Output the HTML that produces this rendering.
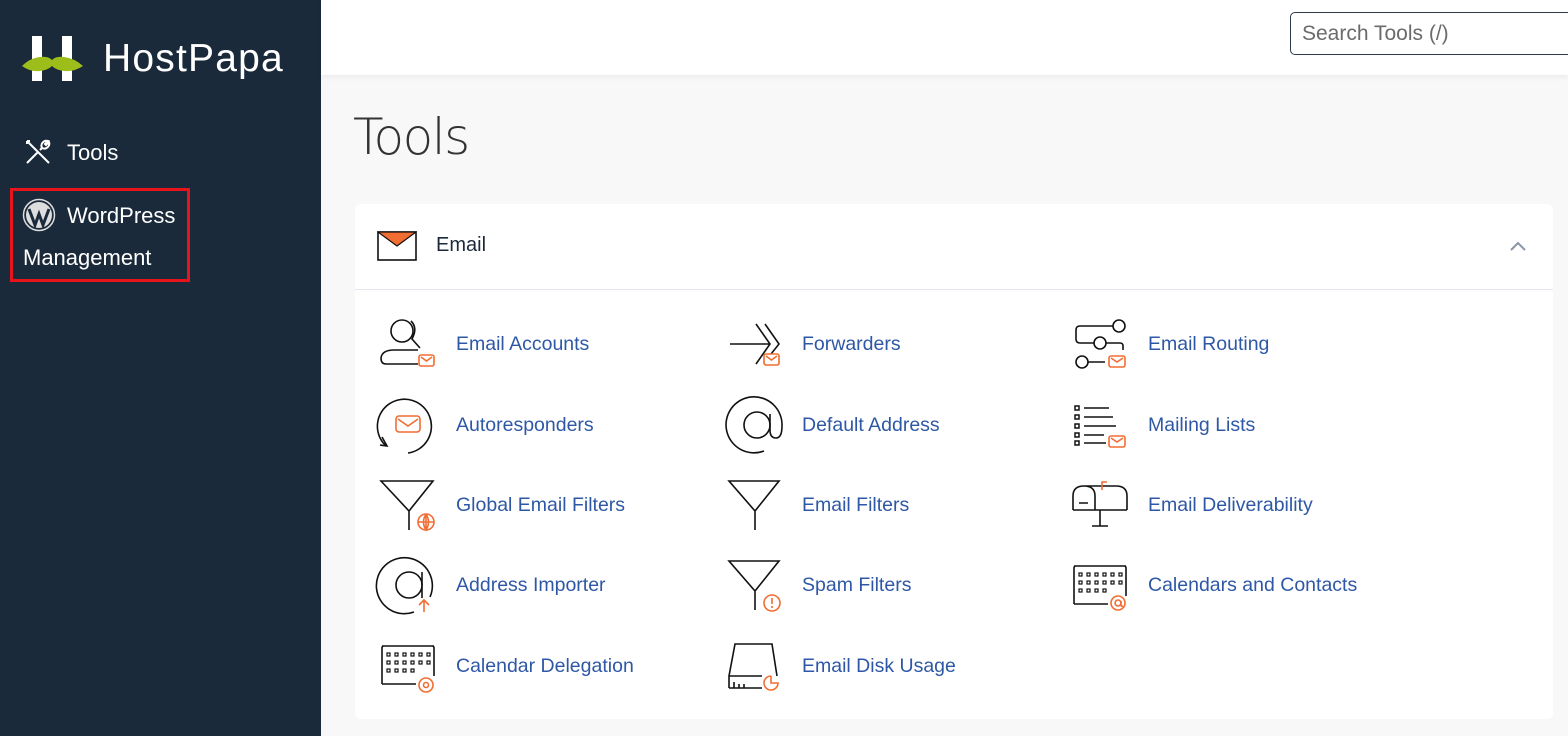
<!DOCTYPE html>
<html><head><meta charset="utf-8"><style>
*{margin:0;padding:0;box-sizing:border-box}
body{width:1568px;height:736px;overflow:hidden;background:#f8f8f8;font-family:"Liberation Sans",sans-serif;position:relative}
.side{position:absolute;left:0;top:0;width:321px;height:736px;background:#1b2a3b}
.hdr{position:absolute;left:321px;top:0;right:0;height:75px;background:#fff;box-shadow:0 2px 6px rgba(0,0,0,.06)}
.search{position:absolute;left:1290px;top:12px;width:300px;height:43px;border:1.5px solid #2d3b4a;border-radius:5px;background:#fff;color:#6b6b6b;font-size:21px;padding:9px 0 0 11px}
h1{position:absolute;left:353px;top:108px;font-size:50px;color:#333;letter-spacing:-1.5px;font-family:"DejaVu Sans","Liberation Sans",sans-serif;font-weight:200}
.card{position:absolute;left:355px;top:204px;width:1198px;height:515px;background:#fff;border-radius:6px}
.ch{height:86px;border-bottom:1px solid #e4e8ee;position:relative}
.ch span{position:absolute;left:81px;top:30px;font-size:20px;color:#1b2a3b}
.it{position:absolute;font-size:19.5px;color:#2e58a6}
.ic{position:absolute;width:60px;height:60px;overflow:visible}
svg .k{fill:none;stroke:#111;stroke-width:1.6}
svg .o{fill:none;stroke:#f26d32;stroke-width:1.6}
.nav{position:absolute;color:#fff;font-size:22px}
</style></head><body>
<div class="side">
<svg style="position:absolute;left:22px;top:36px" width="62" height="46" viewBox="0 0 62 46">
<rect x="10" y="0" width="10" height="45" fill="#fff"/><rect x="40" y="0" width="10" height="45" fill="#fff"/>
<path d="M0 30 Q8 22 18 21 Q26 20 30 24 Q34 20 42 21 Q52 22 61 30 Q52 36 42 35 Q34 34 30 30 Q26 34 18 35 Q8 36 0 30Z" fill="#9cbd1a"/>
</svg>
<div class="nav" style="left:103px;top:37px;font-size:39px;letter-spacing:1.2px">HostPapa</div>
<svg style="position:absolute;left:25px;top:139px" width="26" height="26" viewBox="0 0 26 26"><path d="M2 24 L13 13 M2 2 L24 24 M2 2 L5 2 M2 2 L2 5 M15 11 L17 9 M17 9a5 5 0 0 1 6-7 L20 5 L21 6 L24 3 a5 5 0 0 1 -7 6" stroke="#fff" stroke-width="2" fill="none"/></svg>
<div class="nav" style="left:67px;top:140px">Tools</div>
<div style="position:absolute;left:10px;top:188px;width:180px;height:94px;border:3px solid #e8141b"></div>
<svg style="position:absolute;left:22px;top:198px" width="34" height="34" viewBox="0 0 34 34"><circle cx="17" cy="17" r="15.5" fill="none" stroke="#ddd" stroke-width="1.5"/><circle cx="17" cy="17" r="13" fill="#ddd"/><path d="M7 11 L13 27 L17 16 L21 27 L27 11" stroke="#1b2a3b" stroke-width="3" fill="none"/></svg>
<div class="nav" style="left:67px;top:203px">WordPress</div>
<div class="nav" style="left:23px;top:245px">Management</div>
</div>
<div class="hdr"></div>
<div class="search">Search Tools (/)</div>
<h1>Tools</h1>
<div class="card">
<div class="ch">
<svg style="position:absolute;left:22px;top:27px" width="40" height="30" viewBox="0 0 40 30"><rect x="1" y="1" width="38" height="28" fill="#fff" stroke="#111" stroke-width="1.6"/><path d="M1 1 H39 L20 15Z" fill="#f26d32" stroke="#111" stroke-width="1.2"/></svg>
<span>Email</span>
<svg style="position:absolute;left:1154px;top:36px" width="18" height="12" viewBox="0 0 18 12"><path d="M2 10 L9 3 L16 10" stroke="#8a95a5" stroke-width="2" fill="none"/></svg>
</div>
</div>

<!-- col1 -->
<svg class="ic" style="left:378px;top:316px" viewBox="0 0 60 60"><circle class="k" cx="24" cy="15" r="11"/><path class="k" d="M33 5 Q40 12 34 23 L42 32"/><path class="k" d="M40 34 H16 Q4 34 3 42 Q3 48 8 48 H40"/><rect class="o" x="41" y="39" width="15" height="11" rx="2"/><path class="o" d="M43 41 L48.5 45 L54 41"/></svg>
<div class="it" style="left:456px;top:333px">Email Accounts</div>

<svg class="ic" style="left:378px;top:396px" viewBox="0 0 60 60"><path class="k" d="M8 50 A27 27 0 1 1 30 57"/><path class="k" d="M4 41 L9 50 L2 49"/><rect class="o" x="18" y="20" width="24" height="16" rx="3"/><path class="o" d="M20 23 L30 30 L40 23"/></svg>
<div class="it" style="left:456px;top:414px">Autoresponders</div>

<svg class="ic" style="left:378px;top:476px" viewBox="0 0 60 60"><path class="k" d="M3 5 H55 L31 35Z M31 35 V54"/><circle class="o" cx="48" cy="46" r="8"/><path class="o" d="M40 46 H56 M48 38 Q43 46 48 54 Q53 46 48 38 M48 38 V54"/></svg>
<div class="it" style="left:456px;top:494px">Global Email Filters</div>

<svg class="ic" style="left:378px;top:556px" viewBox="0 0 60 60"><path class="k" d="M52 41 A28 28 0 1 0 36 56"/><circle class="k" cx="31" cy="29" r="13"/><path class="k" d="M44 16 V42"/><path class="o" d="M46 56 V44 M41 49 L46 44 L51 49"/></svg>
<div class="it" style="left:456px;top:574px">Address Importer</div>

<svg class="ic" style="left:378px;top:636px" viewBox="0 0 60 60"><path class="k" d="M4 10 H56 M4 48 V12 Q4 10 6 10 H54 Q56 10 56 12 V40 M4 48 H38"/><g fill="none" stroke="#111" stroke-width="1.2"><rect x="9" y="17" width="3" height="3"/><rect x="17" y="17" width="3" height="3"/><rect x="25" y="17" width="3" height="3"/><rect x="33" y="17" width="3" height="3"/><rect x="41" y="17" width="3" height="3"/><rect x="49" y="17" width="3" height="3"/><rect x="9" y="25" width="3" height="3"/><rect x="17" y="25" width="3" height="3"/><rect x="25" y="25" width="3" height="3"/><rect x="33" y="25" width="3" height="3"/><rect x="41" y="25" width="3" height="3"/><rect x="49" y="25" width="3" height="3"/><rect x="9" y="33" width="3" height="3"/><rect x="17" y="33" width="3" height="3"/><rect x="25" y="33" width="3" height="3"/><rect x="33" y="33" width="3" height="3"/></g><circle class="o" cx="48" cy="49" r="7"/><circle class="o" cx="48" cy="49" r="2.5"/></svg>
<div class="it" style="left:456px;top:655px">Calendar Delegation</div>

<!-- col2 -->
<svg class="ic" style="left:724px;top:316px" viewBox="0 0 60 60"><path class="k" d="M6 28 H46 M32 8 L46 28 L32 48 M41 8 L55 28 L47 38"/><rect class="o" x="40" y="38" width="15" height="11" rx="2"/><path class="o" d="M42 40 L47.5 44 L53 40"/></svg>
<div class="it" style="left:802px;top:333px">Forwarders</div>

<svg class="ic" style="left:724px;top:396px" viewBox="0 0 60 60"><path class="k" d="M40 55 A28 28 0 1 1 58 30 Q58 42 52 42 Q46 42 46 34 V18"/><circle class="k" cx="33" cy="29" r="13"/></svg>
<div class="it" style="left:802px;top:414px">Default Address</div>

<svg class="ic" style="left:724px;top:476px" viewBox="0 0 60 60"><path class="k" d="M5 5 H55 L31 35Z M31 35 V54"/></svg>
<div class="it" style="left:802px;top:494px">Email Filters</div>

<svg class="ic" style="left:724px;top:556px" viewBox="0 0 60 60"><path class="k" d="M5 5 H55 L31 35Z M31 35 V54"/><circle class="o" cx="48" cy="47" r="8"/><path class="o" d="M48 42 V48 M48 50 V52"/></svg>
<div class="it" style="left:802px;top:574px">Spam Filters</div>

<svg class="ic" style="left:724px;top:636px" viewBox="0 0 60 60"><path class="k" d="M5 52 V40 L11 8 H48 L53 40 M5 52 H38 M5 40 H38 M10 46 V52 M15 48 V52 M20 48 V52"/><path class="o" d="M47 40 V47 H54 A7 7 0 1 1 47 40"/></svg>
<div class="it" style="left:802px;top:655px">Email Disk Usage</div>

<!-- col3 -->
<svg class="ic" style="left:1070px;top:316px" viewBox="0 0 60 60"><circle class="k" cx="49" cy="10" r="6"/><path class="k" d="M43 10 H10 Q6 10 6 14 V23 Q6 27 10 27 H24"/><circle class="k" cx="30" cy="27" r="6"/><path class="k" d="M36 27 H50 Q53 27 53 30 V34"/><circle class="k" cx="12" cy="46" r="6"/><path class="k" d="M18 46 H35"/><rect class="o" x="39" y="40" width="16" height="11" rx="2"/><path class="o" d="M41 42 L47 46 L53 42"/></svg>
<div class="it" style="left:1148px;top:333px">Email Routing</div>

<svg class="ic" style="left:1070px;top:396px" viewBox="0 0 60 60"><g fill="none" stroke="#111" stroke-width="1.5"><rect x="5" y="10" width="4" height="4"/><rect x="5" y="19" width="4" height="4"/><rect x="5" y="28" width="4" height="4"/><rect x="5" y="37" width="4" height="4"/><rect x="5" y="45" width="4" height="4"/></g><path class="k" d="M14 12 H39 M14 21 H43 M14 30 H46 M14 39 H34 M14 47 H36"/><rect class="o" x="39" y="40" width="16" height="11" rx="2"/><path class="o" d="M41 42 L47 46 L53 42"/></svg>
<div class="it" style="left:1148px;top:414px">Mailing Lists</div>

<svg class="ic" style="left:1070px;top:476px" viewBox="0 0 60 60"><path class="k" d="M3 34 V20 Q3 10 14 10 Q25 10 25 20 V34 M14 10 H46 Q57 10 57 20 V34 M3 34 H57 M9 27 H18 M30 34 V50 M22 50 H38"/><path class="o" d="M32 14 V6 H37"/></svg>
<div class="it" style="left:1148px;top:494px">Email Deliverability</div>

<svg class="ic" style="left:1070px;top:556px" viewBox="0 0 60 60"><path class="k" d="M4 10 H56 M4 48 V12 Q4 10 6 10 H54 Q56 10 56 12 V40 M4 48 H38"/><g fill="none" stroke="#111" stroke-width="1.2"><rect x="9" y="17" width="3" height="3"/><rect x="17" y="17" width="3" height="3"/><rect x="25" y="17" width="3" height="3"/><rect x="33" y="17" width="3" height="3"/><rect x="41" y="17" width="3" height="3"/><rect x="49" y="17" width="3" height="3"/><rect x="9" y="25" width="3" height="3"/><rect x="17" y="25" width="3" height="3"/><rect x="25" y="25" width="3" height="3"/><rect x="33" y="25" width="3" height="3"/><rect x="41" y="25" width="3" height="3"/><rect x="49" y="25" width="3" height="3"/><rect x="9" y="33" width="3" height="3"/><rect x="17" y="33" width="3" height="3"/><rect x="25" y="33" width="3" height="3"/><rect x="33" y="33" width="3" height="3"/></g><circle class="o" cx="48" cy="47" r="7"/><circle class="o" cx="48" cy="47" r="3"/><path class="o" d="M51 45 V49 Q51 51 53 50"/></svg>
<div class="it" style="left:1148px;top:574px">Calendars and Contacts</div>
</body></html>
